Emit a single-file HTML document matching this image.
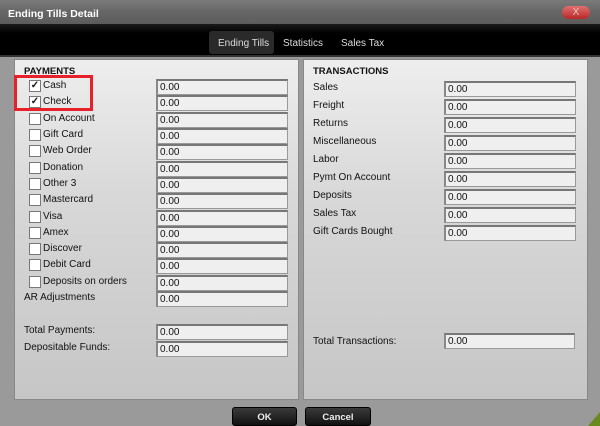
<html><head><style>
*{margin:0;padding:0;box-sizing:border-box}
body{width:600px;height:426px;overflow:hidden;background:#9a9a9a;font-family:"Liberation Sans",sans-serif;font-size:10px;color:#111;position:relative}
.a{position:absolute}
.title{left:0;top:0;width:600px;height:24px;background:linear-gradient(#7a7a7a,#666 50%,#5c5c5c);color:#fff;font-weight:bold;font-size:10.5px;padding:8px 0 0 8px}
.tabs{left:0;top:24px;width:600px;height:33px;background:linear-gradient(#1a1a1a,#000 30%,#000);border-bottom:2px solid #333}
.tab{top:38px;color:#ddd;font-size:10px}
.panel{background:linear-gradient(#eeeeee,#d8d8d8 40%,#c6c6c6);border:1px solid #888;top:59px;height:341px;width:285px}
.in{width:132px;height:16px;background:#efefef;border:1px solid #999;border-top:2px solid #777;border-left:2px solid #888;padding:1px 0 0 2px;font-size:10px}
.cb{width:12px;height:12px;background:#fff;border:1px solid #777;font-size:10px;line-height:10px;text-align:center;font-weight:bold}
.h{font-weight:bold;font-size:9.5px}
.btn{top:407px;height:19px;background:linear-gradient(#3a3a3a,#111);border:1px solid #000;border-radius:3px;color:#eee;font-weight:bold;text-align:center;padding-top:4px;font-size:9.5px}
</style></head><body>
<div class="a title">Ending Tills Detail</div>
<div class="a" style="left:562px;top:6px;width:28px;height:13px;border-radius:7px;background:linear-gradient(#e07070,#b82828);color:#f4c0c0;text-align:center;font-size:10px;line-height:13px">X</div>
<div class="a tabs"></div>
<div class="a" style="left:209px;top:31px;width:65px;height:23px;background:#2a2a2a;border-radius:3px"></div>
<div class="a tab" style="left:218px">Ending Tills</div>
<div class="a tab" style="left:283px">Statistics</div>
<div class="a tab" style="left:341px">Sales Tax</div>
<div class="a panel" style="left:14px"></div>
<div class="a panel" style="left:303px;width:285px"></div>
<div class="a h" style="left:24px;top:66px">PAYMENTS</div>
<div class="a h" style="left:313px;top:66px">TRANSACTIONS</div>
<div class="a cb" style="left:29px;top:80px">✓</div><div class="a" style="left:43px;top:80px">Cash</div><div class="a in" style="left:156px;top:79px">0.00</div>
<div class="a cb" style="left:29px;top:96px">✓</div><div class="a" style="left:43px;top:96px">Check</div><div class="a in" style="left:156px;top:95px">0.00</div>
<div class="a cb" style="left:29px;top:113px"></div><div class="a" style="left:43px;top:113px">On Account</div><div class="a in" style="left:156px;top:112px">0.00</div>
<div class="a cb" style="left:29px;top:129px"></div><div class="a" style="left:43px;top:129px">Gift Card</div><div class="a in" style="left:156px;top:128px">0.00</div>
<div class="a cb" style="left:29px;top:145px"></div><div class="a" style="left:43px;top:145px">Web Order</div><div class="a in" style="left:156px;top:144px">0.00</div>
<div class="a cb" style="left:29px;top:162px"></div><div class="a" style="left:43px;top:162px">Donation</div><div class="a in" style="left:156px;top:161px">0.00</div>
<div class="a cb" style="left:29px;top:178px"></div><div class="a" style="left:43px;top:178px">Other 3</div><div class="a in" style="left:156px;top:177px">0.00</div>
<div class="a cb" style="left:29px;top:194px"></div><div class="a" style="left:43px;top:194px">Mastercard</div><div class="a in" style="left:156px;top:193px">0.00</div>
<div class="a cb" style="left:29px;top:211px"></div><div class="a" style="left:43px;top:211px">Visa</div><div class="a in" style="left:156px;top:210px">0.00</div>
<div class="a cb" style="left:29px;top:227px"></div><div class="a" style="left:43px;top:227px">Amex</div><div class="a in" style="left:156px;top:226px">0.00</div>
<div class="a cb" style="left:29px;top:243px"></div><div class="a" style="left:43px;top:243px">Discover</div><div class="a in" style="left:156px;top:242px">0.00</div>
<div class="a cb" style="left:29px;top:259px"></div><div class="a" style="left:43px;top:259px">Debit Card</div><div class="a in" style="left:156px;top:258px">0.00</div>
<div class="a cb" style="left:29px;top:276px"></div><div class="a" style="left:43px;top:276px">Deposits on orders</div><div class="a in" style="left:156px;top:275px">0.00</div>
<div class="a" style="left:24px;top:292px">AR Adjustments</div><div class="a in" style="left:156px;top:291px">0.00</div>
<div class="a" style="left:24px;top:325px">Total Payments:</div><div class="a in" style="left:156px;top:324px">0.00</div>
<div class="a" style="left:24px;top:342px">Depositable Funds:</div><div class="a in" style="left:156px;top:341px">0.00</div>
<div class="a" style="left:14px;top:75px;width:79px;height:36px;border:3px solid #e8202a"></div>
<div class="a" style="left:313px;top:82px">Sales</div><div class="a in" style="left:444px;top:81px">0.00</div>
<div class="a" style="left:313px;top:100px">Freight</div><div class="a in" style="left:444px;top:99px">0.00</div>
<div class="a" style="left:313px;top:118px">Returns</div><div class="a in" style="left:444px;top:117px">0.00</div>
<div class="a" style="left:313px;top:136px">Miscellaneous</div><div class="a in" style="left:444px;top:135px">0.00</div>
<div class="a" style="left:313px;top:154px">Labor</div><div class="a in" style="left:444px;top:153px">0.00</div>
<div class="a" style="left:313px;top:172px">Pymt On Account</div><div class="a in" style="left:444px;top:171px">0.00</div>
<div class="a" style="left:313px;top:190px">Deposits</div><div class="a in" style="left:444px;top:189px">0.00</div>
<div class="a" style="left:313px;top:208px">Sales Tax</div><div class="a in" style="left:444px;top:207px">0.00</div>
<div class="a" style="left:313px;top:226px">Gift Cards Bought</div><div class="a in" style="left:444px;top:225px">0.00</div>
<div class="a" style="left:313px;top:336px">Total Transactions:</div><div class="a in" style="left:444px;top:333px;width:131px">0.00</div>
<div class="a btn" style="left:232px;width:65px">OK</div>
<div class="a btn" style="left:305px;width:66px">Cancel</div>
<div class="a" style="left:588px;top:412px;width:0;height:0;border-left:12px solid transparent;border-bottom:14px solid #6a8a20"></div>
</body></html>
